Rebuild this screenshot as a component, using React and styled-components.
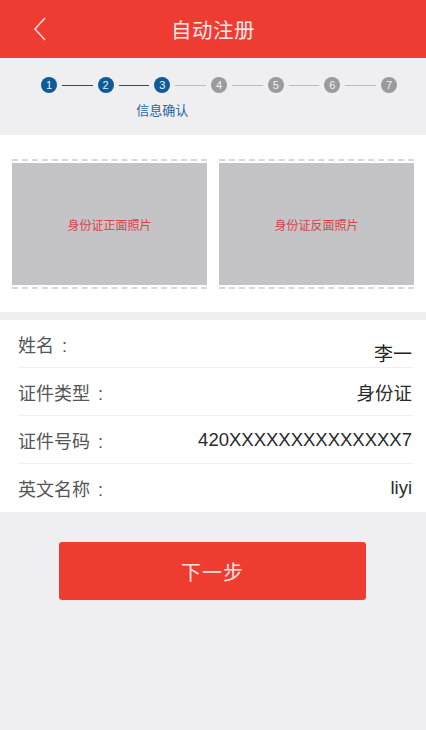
import React from "react";
import styled, { createGlobalStyle } from "styled-components";

const GlobalStyle = createGlobalStyle`
  html, body {
    margin: 0;
    padding: 0;
    background: #efeef1;
  }
  body {
    font-family: "Liberation Sans", "Noto Sans CJK SC", sans-serif;
  }
`;

const steps = [1, 2, 3, 4, 5, 6, 7];
const current = 3;

const fields = [
  { label: "姓名", value: "李一", drop: true },
  { label: "证件类型", value: "身份证" },
  { label: "证件号码", value: "420XXXXXXXXXXXXXX7" },
  { label: "英文名称", value: "liyi" },
];

const Page = styled.div`
  width: 426px;
  min-height: 730px;
  background: #efeef1;
  display: flex;
  flex-direction: column;
`;

const Header = styled.div`
  height: 58px;
  background: #ee3c33;
  display: grid;
  grid-template-columns: 80px 1fr 80px;
  align-items: center;
`;

const BackButton = styled.div`
  display: flex;
  align-items: center;
  padding-left: 32px;
  svg {
    display: block;
  }
`;

const Title = styled.h1`
  margin: 0;
  text-align: center;
  font-size: 20.5px;
  font-weight: normal;
  color: #fde9e6;
  letter-spacing: 0.5px;
`;

const Stepper = styled.div`
  height: 77px;
  box-sizing: border-box;
  padding: 19px 29px 0 41px;
  display: flex;
  align-items: flex-start;
`;

const Step = styled.div`
  width: 16px;
  display: flex;
  flex-direction: column;
  align-items: center;
  flex-shrink: 0;
`;

const Dot = styled.div`
  width: 16px;
  height: 16px;
  border-radius: 50%;
  background: ${(p) => (p.$done ? "#0d5b98" : "#9b9a9c")};
  color: #f2f2f2;
  font-size: 11px;
  line-height: 16px;
  text-align: center;
`;

const StepLabel = styled.div`
  margin-top: 7px;
  white-space: nowrap;
  font-size: 13px;
  color: #2767a4;
`;

const Line = styled.div`
  flex: 1;
  margin: 7.5px 5px 0;
  height: ${(p) => (p.$done ? "1.5px" : "1px")};
  background: ${(p) => (p.$done ? "#1f4c78" : "#bdbcbe")};
`;

const PhotoCard = styled.div`
  background: #fff;
  padding: 24px 12px 23px;
  display: grid;
  grid-template-columns: 1fr 1fr;
  gap: 12px;
`;

const PhotoFrame = styled.div`
  border-top: 2px dashed #d8d7da;
  border-bottom: 2px dashed #d8d7da;
  padding: 2px 0;
`;

const Photo = styled.div`
  height: 122px;
  background: #c4c3c5;
  display: flex;
  align-items: center;
  justify-content: center;
  font-size: 12px;
  color: #d8434a;
`;

const Form = styled.div`
  margin-top: 8px;
  background: #fff;
  padding: 0 14px 0 18px;
`;

const Row = styled.div`
  height: 48px;
  display: flex;
  align-items: center;
  justify-content: space-between;
  border-bottom: 1px solid #eeedf0;
  box-sizing: border-box;
  &:last-child {
    border-bottom: none;
  }
`;

const Label = styled.span`
  font-size: 18px;
  color: #555;
`;

const Colon = styled.span`
  margin-left: 8px;
`;

const Value = styled.span`
  font-size: ${(p) => (p.$drop ? "19px" : "18.5px")};
  color: ${(p) => (p.$drop ? "#222" : "#2a2a2a")};
  padding-top: ${(p) => (p.$drop ? "17px" : "0")};
`;

const ButtonWrap = styled.div`
  padding: 30px 0 0 59px;
`;

const NextButton = styled.button`
  width: 307px;
  height: 58px;
  border: none;
  border-radius: 3px;
  background: #ee3c31;
  color: #fbe3df;
  font-family: inherit;
  font-size: 20px;
  letter-spacing: 1px;
`;

export default function App() {
  return (
    <>
      <GlobalStyle />
      <Page>
        <Header>
          <BackButton>
            <svg width="16" height="26" viewBox="0 0 16 26">
              <path d="M13 2 L3 13 L13 24" fill="none" stroke="#fbd9d5" strokeWidth="1.6" />
            </svg>
          </BackButton>
          <Title>自动注册</Title>
          <div />
        </Header>
        <Stepper>
          {steps.map((n, i) => (
            <React.Fragment key={n}>
              {i > 0 && <Line $done={n <= current} />}
              <Step>
                <Dot $done={n <= current}>{n}</Dot>
                {n === current && <StepLabel>信息确认</StepLabel>}
              </Step>
            </React.Fragment>
          ))}
        </Stepper>
        <PhotoCard>
          <PhotoFrame>
            <Photo>身份证正面照片</Photo>
          </PhotoFrame>
          <PhotoFrame>
            <Photo>身份证反面照片</Photo>
          </PhotoFrame>
        </PhotoCard>
        <Form>
          {fields.map((f) => (
            <Row key={f.label}>
              <Label>
                {f.label}
                <Colon>:</Colon>
              </Label>
              <Value $drop={f.drop}>{f.value}</Value>
            </Row>
          ))}
        </Form>
        <ButtonWrap>
          <NextButton>下一步</NextButton>
        </ButtonWrap>
      </Page>
    </>
  );
}
